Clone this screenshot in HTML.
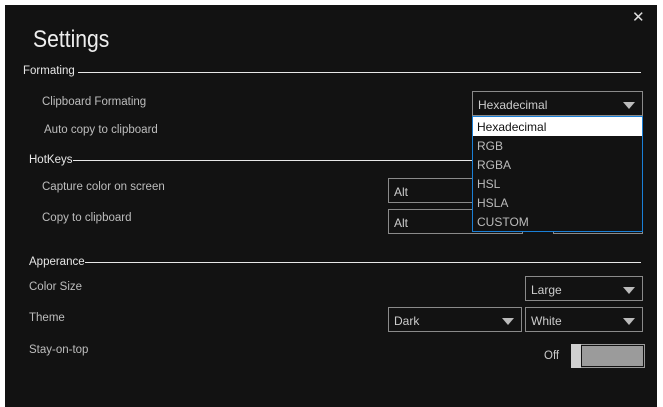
<!DOCTYPE html>
<html><head><style>
body{margin:0;width:663px;height:407px;background:#fff;position:relative;overflow:hidden;font-family:"Liberation Sans",sans-serif;}
#w{position:absolute;left:5px;top:5px;width:652px;height:402px;background:#121212;}
.t{position:absolute;color:#bdbdbd;font-size:11.5px;white-space:nowrap;}
.h{color:#e6e6e6;}
.line{position:absolute;height:1px;background:#e8e8e8;}
.box{position:absolute;border:1px solid #8a8a8a;box-sizing:border-box;color:#ccc;font-size:12px;padding:6px 0 0 5px;}
.arr{position:absolute;right:7px;top:10px;width:0;height:0;border-left:6px solid transparent;border-right:6px solid transparent;border-top:7px solid #bbb;}
.it{position:absolute;left:1px;width:169px;height:19px;color:#bbb;font-size:12px;padding-left:4px;line-height:20px;box-sizing:border-box;}
</style></head><body>
<div id="w"></div>
<div class="t" style="left:632px;top:8px;font-size:15px;color:#ddd;">✕</div>
<div class="t h" style="left:33px;top:26px;font-size:24px;color:#eee;transform:scaleX(0.88);transform-origin:left;">Settings</div>
<div class="t h" style="left:23px;top:65px;">Formating</div>
<div class="line" style="left:78px;top:72px;width:563px;"></div>
<div class="t" style="left:42px;top:96px;">Clipboard Formating</div>
<div class="t" style="left:44px;top:124px;">Auto copy to clipboard</div>
<div class="t h" style="left:29px;top:154px;">HotKeys</div>
<div class="line" style="left:73px;top:160px;width:400px;"></div>
<div class="t" style="left:42px;top:181px;">Capture color on screen</div>
<div class="t" style="left:42px;top:212px;">Copy to clipboard</div>
<div class="box" style="left:388px;top:178px;width:136px;height:25px;">Alt</div>
<div class="box" style="left:388px;top:209px;width:135px;height:25px;">Alt</div>
<div class="box" style="left:553px;top:209px;width:90px;height:25px;"></div>
<div class="box" style="left:472px;top:91px;width:171px;height:25px;">Hexadecimal<div class="arr"></div></div>
<div style="position:absolute;left:472px;top:116px;width:171px;height:116px;border:1px solid #1a7fd6;box-sizing:border-box;background:#121212;">
<div class="it" style="top:0;left:0;background:#fff;color:#111;">Hexadecimal</div>
<div class="it" style="top:19px;left:0;">RGB</div>
<div class="it" style="top:38px;left:0;">RGBA</div>
<div class="it" style="top:57px;left:0;">HSL</div>
<div class="it" style="top:76px;left:0;">HSLA</div>
<div class="it" style="top:95px;left:0;">CUSTOM</div>
</div>
<div class="t h" style="left:29px;top:256px;">Apperance</div>
<div class="line" style="left:85px;top:262px;width:556px;"></div>
<div class="t" style="left:29px;top:281px;">Color Size</div>
<div class="t" style="left:29px;top:312px;">Theme</div>
<div class="t" style="left:29px;top:344px;">Stay-on-top</div>
<div class="box" style="left:525px;top:276px;width:118px;height:25px;">Large<div class="arr"></div></div>
<div class="box" style="left:388px;top:307px;width:134px;height:25px;">Dark<div class="arr"></div></div>
<div class="box" style="left:525px;top:307px;width:118px;height:25px;">White<div class="arr"></div></div>
<div class="t" style="left:544px;top:350px;color:#ccc;">Off</div>
<div style="position:absolute;left:571px;top:344px;width:74px;height:24px;border:1px solid #9a9a9a;box-sizing:border-box;background:#121212;"></div>
<div style="position:absolute;left:582px;top:346px;width:61px;height:20px;background:#9b9b9b;"></div>
<div style="position:absolute;left:571px;top:344px;width:10px;height:24px;background:#d0d0d0;"></div>
</body></html>
